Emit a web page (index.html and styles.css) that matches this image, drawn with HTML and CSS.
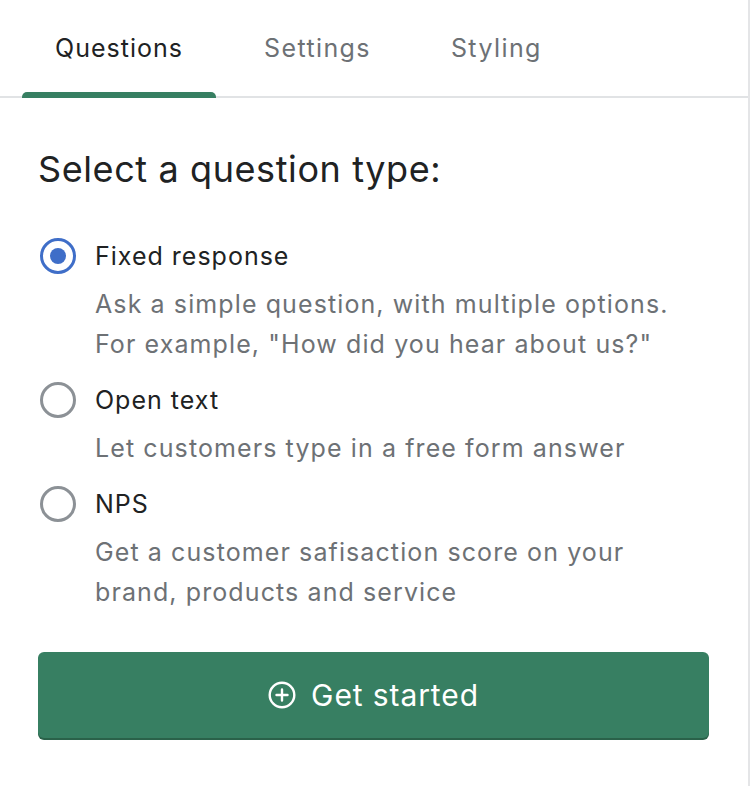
FILE: index.html
```html
<!DOCTYPE html>
<html lang="en">
<head>
    <meta charset="UTF-8">
    <meta name="viewport" content="width=device-width, initial-scale=1.0">
    <title>Survey builder - Questions</title>
    <link rel="stylesheet" href="styles.css">
</head>
<body>
    <div class="panel">
        <div class="tabs">
            <div class="tab active">Questions</div>
            <div class="tab">Settings</div>
            <div class="tab">Styling</div>
        </div>

        <div class="content">
            <h1>Select a question type:</h1>

            <div class="options">
                <label class="option">
                    <span class="radio checked"></span>
                    <span class="option-body">
                        <span class="option-title">Fixed response</span>
                        <span class="option-desc">Ask a simple question, with multiple options. For example, "How did you hear about us?"</span>
                    </span>
                </label>
                <label class="option">
                    <span class="radio"></span>
                    <span class="option-body">
                        <span class="option-title">Open text</span>
                        <span class="option-desc">Let customers type in a free form answer</span>
                    </span>
                </label>
                <label class="option">
                    <span class="radio"></span>
                    <span class="option-body">
                        <span class="option-title">NPS</span>
                        <span class="option-desc">Get a customer safisaction score on your brand, products and service</span>
                    </span>
                </label>
            </div>

            <button class="start-btn">
                <svg width="28" height="28" viewBox="0 0 28 28" fill="none" stroke="#fff" stroke-width="2.4" stroke-linecap="round">
                    <circle cx="14" cy="14" r="12.3"/>
                    <path d="M14 8.5v11M8.5 14h11"/>
                </svg>
                Get started
            </button>
        </div>
    </div>
</body>
</html>
```

FILE: styles.css
```css
body {
    margin: 0;
    font-family: Inter, "Noto Sans", sans-serif;
    background: #fff;
    color: #202223;
}
.panel {
    width: 748px;
    height: 786px;
    border-right: 2px solid #e4e5e7;
    background: #fff;
}
.tabs {
    display: flex;
    gap: 16px;
    height: 98px;
    padding-left: 22px;
    border-bottom: 2px solid #e1e3e5;
    box-sizing: border-box;
}
.tab {
    position: relative;
    padding: 33px 32px 0;
    font-size: 25px;
    color: #6d7175;
    letter-spacing: 1.4px;
}
.tab.active {
    width: 194px;
    box-sizing: border-box;
    text-align: center;
    padding: 33px 0 0;
    color: #202223;
    letter-spacing: 1px;
}
.tab.active::after {
    content: "";
    position: absolute;
    left: 0;
    right: 0;
    bottom: -2px;
    height: 6px;
    background: #377f62;
    border-radius: 5px 5px 0 0;
}
.content {
    padding: 49px 39px 0 38px;
}
h1 {
    margin: 0 0 45px;
    font-size: 36px;
    font-weight: 400;
    line-height: 44px;
    letter-spacing: 0.6px;
}
.options {
    display: flex;
    flex-direction: column;
    gap: 16px;
}
.option {
    display: flex;
    gap: 19px;
    padding-left: 2px;
    cursor: pointer;
}
.radio {
    flex: none;
    width: 36px;
    height: 36px;
    margin-top: 2px;
    border: 3px solid #8c9196;
    border-radius: 50%;
    box-sizing: border-box;
    display: flex;
    align-items: center;
    justify-content: center;
}
.radio.checked {
    border-color: #3f6ec8;
}
.radio.checked::after {
    content: "";
    width: 16px;
    height: 16px;
    border-radius: 50%;
    background: #3f6ec8;
}
.option-body {
    display: flex;
    flex-direction: column;
    gap: 8px;
}
.option-title {
    font-size: 25px;
    line-height: 40px;
    color: #202223;
    letter-spacing: 1px;
}
.option-desc {
    font-size: 25px;
    line-height: 40px;
    color: #6d7175;
    letter-spacing: 1.1px;
}
.start-btn {
    display: flex;
    align-items: center;
    justify-content: center;
    gap: 15px;
    width: 100%;
    height: 86px;
    margin-top: 40px;
    border: none;
    border-radius: 6px;
    background: #377f62;
    box-shadow: 0 2px 0 #2a6149;
    color: #fff;
    font-family: inherit;
    font-size: 30px;
    letter-spacing: 0.9px;
    cursor: pointer;
}
```
